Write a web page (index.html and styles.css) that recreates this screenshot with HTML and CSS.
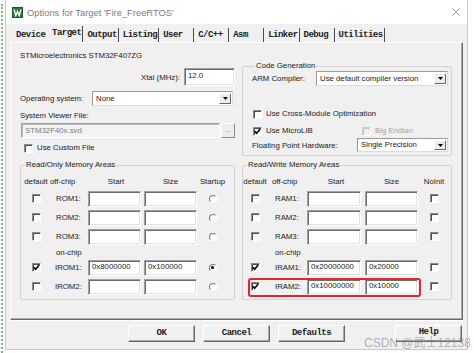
FILE: index.html
```html
<!DOCTYPE html>
<html>
<head>
<meta charset="utf-8">
<title>Options for Target</title>
<link rel="stylesheet" href="styles.css">
</head>
<body>
<div class="screen">
  <div class="editor-edge"><div class="dots"></div></div>
  <div class="window">
    <div class="titlebar">
      <svg class="app-icon" viewBox="0 0 11 11"><rect x="0.5" y="0.5" width="10" height="10" fill="#2f7d34" stroke="#1b5a20"/><polyline points="2,2.5 3.8,8.5 5.5,4.5 7.2,8.5 9,2.5" fill="none" stroke="#fff" stroke-width="1.3"/></svg>
      <span class="title">Options for Target 'Fire_FreeRTOS'</span>
      <svg class="close" viewBox="0 0 8 8"><path d="M0.5 0.5 L7.5 7.5 M7.5 0.5 L0.5 7.5" stroke="#8f8f8f" stroke-width="0.9"/></svg>
    </div>
    <div class="tabs">
      <span class="tab first">Device</span>
      <span class="tab active">Target</span>
      <span class="tab">Output</span>
      <span class="tab">Listing</span>
      <span class="tab">User</span>
      <span class="tab">C/C++</span>
      <span class="tab">Asm</span>
      <span class="tab">Linker</span>
      <span class="tab">Debug</span>
      <span class="tab">Utilities</span>
    </div>
    <div class="panel">
      <div class="col col-left">
        <div class="device">STMicroelectronics STM32F407ZG</div>
        <div class="xtal-row"><span>Xtal (MHz):</span><span class="edit xtal">12.0</span></div>
        <div class="os-row"><span class="os-lbl">Operating system:</span>
          <div class="select os-select"><span class="sel-val">None</span><span class="drop"><svg viewBox="0 0 5 3"><polygon points="0,0 5,0 2.5,3" fill="#000"/></svg></span></div>
        </div>
        <div class="svf-lbl">System Viewer File:</div>
        <div class="svd-row"><span class="edit disabled svd">STM32F40x.svd</span><span class="browse">...</span></div>
        <div class="cb-row custom"><span class="cb"></span><span>Use Custom File</span></div>
        <fieldset class="group mem ro">
          <legend>Read/Only Memory Areas</legend>
          <div class="mem-grid ro-grid">
            <span class="h">default</span><span class="h h-off">off-chip</span><span class="h">Start</span><span class="h">Size</span><span class="h">Startup</span>
            <span class="cb c"></span><span class="mlbl">ROM1:</span><span class="edit mem-in"></span><span class="edit mem-in"></span><span class="radio"></span>
            <span class="cb c"></span><span class="mlbl">ROM2:</span><span class="edit mem-in"></span><span class="edit mem-in"></span><span class="radio"></span>
            <span class="cb c"></span><span class="mlbl">ROM3:</span><span class="edit mem-in"></span><span class="edit mem-in"></span><span class="radio"></span>
            <span></span><span class="onchip">on-chip</span><span></span><span></span><span></span>
            <span class="cb c checked"><svg viewBox="0 0 7 7"><polyline points="0.8,3.2 2.6,5.2 6.2,1" fill="none" stroke="#000" stroke-width="1.6"/></svg></span><span class="mlbl i">IROM1:</span><span class="edit mem-in">0x8000000</span><span class="edit mem-in">0x100000</span><span class="radio on"></span>
            <span class="cb c"></span><span class="mlbl i">IROM2:</span><span class="edit mem-in"></span><span class="edit mem-in"></span><span class="radio"></span>
          </div>
        </fieldset>
      </div>
      <div class="col col-right">
        <fieldset class="group codegen">
          <legend>Code Generation</legend>
          <div class="arm-row"><span class="arm-lbl">ARM Compiler:</span>
            <div class="select arm-select"><span class="sel-val">Use default compiler version</span><span class="drop"><svg viewBox="0 0 5 3"><polygon points="0,0 5,0 2.5,3" fill="#000"/></svg></span></div>
          </div>
          <div class="cb-row cmo"><span class="cb"></span><span>Use Cross-Module Optimization</span></div>
          <div class="cb-row micro">
            <span class="cb-item wide"><span class="cb checked"><svg viewBox="0 0 7 7"><polyline points="0.8,3.2 2.6,5.2 6.2,1" fill="none" stroke="#000" stroke-width="1.6"/></svg></span><span>Use MicroLIB</span></span>
            <span class="cb-item off"><span class="cb dis"></span><span>Big Endian</span></span>
          </div>
          <div class="fph-row"><span class="fph-lbl">Floating Point Hardware:</span>
            <div class="select fph-select"><span class="sel-val">Single Precision</span><span class="drop"><svg viewBox="0 0 5 3"><polygon points="0,0 5,0 2.5,3" fill="#000"/></svg></span></div>
          </div>
        </fieldset>
        <fieldset class="group mem rw">
          <legend>Read/Write Memory Areas</legend>
          <div class="mem-grid rw-grid">
            <span class="h">default</span><span class="h h-off">off-chip</span><span class="h">Start</span><span class="h">Size</span><span class="h">NoInit</span>
            <span class="cb c"></span><span class="mlbl">RAM1:</span><span class="edit mem-in"></span><span class="edit mem-in"></span><span class="cb c"></span>
            <span class="cb c"></span><span class="mlbl">RAM2:</span><span class="edit mem-in"></span><span class="edit mem-in"></span><span class="cb c"></span>
            <span class="cb c"></span><span class="mlbl">RAM3:</span><span class="edit mem-in"></span><span class="edit mem-in"></span><span class="cb c"></span>
            <span></span><span class="onchip">on-chip</span><span></span><span></span><span></span>
            <span class="cb c checked"><svg viewBox="0 0 7 7"><polyline points="0.8,3.2 2.6,5.2 6.2,1" fill="none" stroke="#000" stroke-width="1.6"/></svg></span><span class="mlbl">IRAM1:</span><span class="edit mem-in">0x20000000</span><span class="edit mem-in">0x20000</span><span class="cb c"></span>
            <span class="cb c checked r7 g1"><svg viewBox="0 0 7 7"><polyline points="0.8,3.2 2.6,5.2 6.2,1" fill="none" stroke="#000" stroke-width="1.6"/></svg></span><span class="mlbl r7 g2">IRAM2:</span><span class="edit mem-in r7 g3">0x10000000</span><span class="edit mem-in r7 g4">0x10000</span><span class="cb c r7 g5"></span>
            <span class="highlight"></span>
          </div>
        </fieldset>
      </div>
    </div>
    <div class="buttons">
      <span class="btn">OK</span>
      <span class="btn">Cancel</span>
      <span class="btn">Defaults</span>
      <span class="btn help">Help</span>
    </div>
  </div>
  <div class="watermark">CSDN @武士12138</div>
</div>
</body>
</html>
```

FILE: styles.css
```css
* { box-sizing: border-box; }
html, body { margin: 0; padding: 0; background: #fff; }
body {
  font-family: "Liberation Sans", Arial, sans-serif;
  font-size: 7.8px;
  color: #1a1a1a;
}
.screen {
  position: relative;
  display: flex;
  width: 474px;
  height: 353px;
  overflow: hidden;
  background: #fff;
}
.editor-edge { width: 5px; flex: none; padding-top: 4px; }
.editor-edge .dots { margin-left: 1px; height: 100%; border-left: 2px dotted #7fb07f; }

.window {
  width: 463px;
  height: 350px;
  flex: none;
  background: #f0f0f0;
  border: 1px solid #c9c9c9;
  border-top: none;
  display: flex;
  flex-direction: column;
}
.titlebar {
  height: 24px;
  flex: none;
  background: #fff;
  display: flex;
  align-items: center;
  padding-left: 6px;
}
.app-icon { width: 11px; height: 11px; flex: none; }
.title { margin-left: 4px; font-size: 9.4px; color: #7d7d7d; white-space: nowrap; }
.close { margin-left: auto; margin-right: 7px; width: 8px; height: 8px; flex: none; }

.tabs {
  height: 18px;
  flex: none;
  display: flex;
  align-items: flex-end;
  padding-left: 6px;
  font-family: "Liberation Mono", monospace;
  font-weight: bold;
  font-size: 9px;
  letter-spacing: -0.5px;
}
.tab {
  height: 14px;
  line-height: 14px;
  min-width: 35px;
  padding: 0 1px 0 4px;
  border-right: 1px solid #4a4a4a;
  color: #1c1c1c;
  white-space: nowrap;
}
.tab.first { width: 36px; border-right: none; }
.tab.active { height: 16px; line-height: 14px; padding-left: 4px; }

.panel {
  height: 278px;
  flex: none;
  margin: 0 4px;
  border-top: 1px solid #fff;
  border-left: 1px solid #fff;
  border-right: 1px solid #6a6a6a;
  border-bottom: 1px solid #6a6a6a;
  box-shadow: inset -1px -1px 0 #a8a8a8, 0 1px 0 #fff;
  display: flex;
  padding-left: 9px;
  column-gap: 7px;
}
.col { display: flex; flex-direction: column; }
.col-left { width: 215px; }
.col-right { width: 210px; }

.device { margin-top: 7px; line-height: 12px; height: 12px; white-space: nowrap; }

.edit {
  background: #fff;
  border-top: 1px solid #a0a0a0;
  border-left: 1px solid #a0a0a0;
  border-right: 1px solid #fff;
  border-bottom: 1px solid #fff;
  box-shadow: inset 1px 1px 0 #6d6d6d, inset -1px -1px 0 #e3e3e3;
  padding-left: 3px;
  display: flex;
  align-items: center;
  white-space: nowrap;
  overflow: hidden;
}
.edit.disabled { background: #f3f3f3; color: #7b7b7b; box-shadow: inset 1px 1px 0 #b9b9b9; }

.xtal-row { margin-top: 6px; height: 18px; display: flex; align-items: center; justify-content: flex-end; column-gap: 4px; }
.xtal { width: 51px; height: 18px; align-items: flex-start; padding-top: 2px; }

.os-row { margin-top: 5px; height: 15px; display: flex; align-items: center; }
.os-lbl { width: 72px; }
.select {
  display: flex;
  background: #fff;
  border: 1px solid #9a9a9a;
  border-right-color: #dcdcdc;
  border-bottom-color: #dcdcdc;
  height: 15px;
}
.sel-val { flex: 1; padding-left: 3px; line-height: 13px; white-space: nowrap; overflow: hidden; }
.drop {
  width: 12px;
  margin: 1px;
  background: #ececec;
  border-top: 1px solid #fff;
  border-left: 1px solid #fff;
  border-right: 1px solid #6a6a6a;
  border-bottom: 1px solid #6a6a6a;
  display: flex;
  align-items: center;
  justify-content: center;
}
.drop svg { width: 5px; height: 3px; }
.os-select { width: 141px; }

.svf-lbl { margin-top: 4px; line-height: 12px; height: 12px; }
.svd-row { margin-top: 1px; height: 15px; display: flex; padding-left: 1px; }
.svd { width: 199px; height: 15px; }
.browse {
  width: 14px;
  height: 15px;
  margin-left: 1px;
  background: #ececec;
  border-top: 1px solid #fff;
  border-left: 1px solid #fff;
  border-right: 1px solid #8a8a8a;
  border-bottom: 1px solid #8a8a8a;
  color: #8a8a8a;
  text-align: center;
  line-height: 11px;
}

.cb-row { display: flex; align-items: center; column-gap: 4px; line-height: 12px; height: 12px; white-space: nowrap; }
.custom { margin-top: 4px; padding-left: 4px; }
.cb {
  width: 9px;
  height: 9px;
  flex: none;
  background: #fbfbfb;
  border-top: 1px solid #8a8a8a;
  border-left: 1px solid #8a8a8a;
  border-right: 1px solid #fff;
  border-bottom: 1px solid #fff;
  box-shadow: inset 1px 1px 0 #505050;
  display: flex;
  align-items: center;
  justify-content: center;
}
.cb svg { width: 7px; height: 7px; }
.cb.dis { background: #f0f0f0; box-shadow: inset 1px 1px 0 #c4c4c4; border-color: #cfcfcf #fff #fff #cfcfcf; }
.cb.c { justify-self: center; }

.radio {
  justify-self: center;
  width: 8px;
  height: 8px;
  border-radius: 50%;
  border: 1px solid;
  border-color: #7a7a7a #fff #fff #7a7a7a;
  background: #fbfbfb;
  display: flex;
  align-items: center;
  justify-content: center;
}
.radio.on::after { content: ""; width: 3px; height: 3px; border-radius: 50%; background: #000; }

.group {
  margin: 0;
  border: 1px solid #d2d2d2;
  border-radius: 2px;
  min-width: 0;
}
.group legend {
  padding: 0 1px;
  margin-left: 3px;
  line-height: 10px;
  height: 10px;
  white-space: nowrap;
}

.ro { margin-top: 6px; padding: 4px 1px 3px 1px; }
.rw { margin-top: 4px; padding: 4px 1px 3px 1px; }

.mem-grid {
  display: grid;
  grid-template-rows: 15px 19px 19px 19px 12px 19px 19px;
  align-items: center;
  white-space: nowrap;
}
.ro-grid { grid-template-columns: 28px 38px 56px 53px 31px; }
.rw-grid { grid-template-columns: 22px 41px 58px 53px 32px; }
.r7 { grid-row: 7; }
.g1 { grid-column: 1; }
.g2 { grid-column: 2; }
.g3 { grid-column: 3; }
.g4 { grid-column: 4; }
.g5 { grid-column: 5; }
.h { justify-self: center; }
.h-off { justify-self: start; }
.ro-grid .mlbl { padding-left: 6px; }
.ro-grid .mlbl.i { padding-left: 5px; }
.ro-grid .onchip { padding-left: 6px; }
.rw-grid .h-off { padding-left: 6px; }
.rw-grid .mlbl, .rw-grid .onchip { padding-left: 9px; }
.onchip { align-self: end; line-height: 10px; }
.mem-in { width: 53px; height: 16px; align-items: flex-start; padding-top: 1px; }
.rw-grid .mem-in { width: 54px; }
.rw-grid .mem-in + .mem-in { width: 53px; }

.highlight {
  grid-row: 7;
  grid-column: 1 / 5;
  align-self: stretch;
  margin: 1px -3px -1px 4px;
  border: 2px solid #e3262a;
  border-radius: 3px;
  pointer-events: none;
}

.codegen { margin-top: 18px; padding: 0 3px 3px 9px; }
.arm-row { height: 15px; display: flex; align-items: center; }
.arm-lbl { width: 64px; }
.arm-select { width: 132px; }
.cmo { margin-top: 22px; padding-left: 1px; }
.micro { margin-top: 5px; padding-left: 1px; }
.cb-item { display: flex; align-items: center; column-gap: 4px; }
.cb-item.wide { width: 105px; }
.cb-item.off { color: #a3a3a3; }
.fph-row { height: 14px; display: flex; align-items: center; margin-top: 1px; }
.fph-lbl { width: 105px; }
.fph-select { width: 91px; height: 14px; }
.fph-select .sel-val { line-height: 12px; }

.buttons {
  display: flex;
  margin-top: 5px;
  padding-left: 122px;
  column-gap: 8px;
}
.btn {
  width: 67px;
  height: 17px;
  background: #f0f0f0;
  border-top: 1px solid #fff;
  border-left: 1px solid #fff;
  border-right: 1px solid #6a6a6a;
  border-bottom: 1px solid #6a6a6a;
  box-shadow: inset -1px -1px 0 #a8a8a8;
  font-family: "Liberation Mono", monospace;
  font-weight: bold;
  font-size: 9px;
  letter-spacing: -0.5px;
  text-align: center;
  line-height: 15px;
  color: #1c1c1c;
}
.btn.help { margin-left: 42px; line-height: 12px; }

.watermark {
  position: absolute;
  left: 364px;
  top: 333px;
  font-family: "Liberation Sans", "Noto Sans CJK SC", sans-serif;
  font-size: 12px;
  color: rgba(120, 120, 120, 0.55);
  white-space: nowrap;
  pointer-events: none;
}
```
